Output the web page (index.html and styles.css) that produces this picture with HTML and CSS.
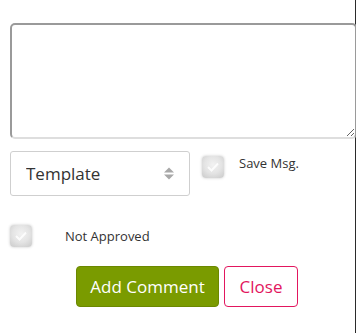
FILE: index.html
```html
<!DOCTYPE html>
<html lang="en">
<head>
    <meta charset="UTF-8">
    <meta name="viewport" content="width=device-width, initial-scale=1.0">
    <title>Add Comment</title>
    <link rel="stylesheet" href="styles.css">
</head>
<body>
    <div class="panel">
        <textarea class="comment-box"></textarea>

        <div class="row template-row">
            <div class="select-wrap">
                <select class="template-select">
                    <option>Template</option>
                </select>
                <svg class="select-arrows" width="10" height="13" viewBox="0 0 10 13">
                    <path d="M5 0.5 L10 5.5 H0 Z" fill="#a8a8a8"/>
                    <path d="M5 12.5 L10 7.5 H0 Z" fill="#a8a8a8"/>
                </svg>
            </div>
            <label class="check save-msg">
                <span class="check-box">
                    <svg width="14" height="12" viewBox="0 0 14 12"><path d="M2 6 L5.5 9.5 L12 2.5" fill="none" stroke="#fff" stroke-width="2"/></svg>
                </span>
                <span class="check-label">Save Msg.</span>
            </label>
        </div>

        <div class="row approve-row">
            <label class="check">
                <span class="check-box">
                    <svg width="14" height="12" viewBox="0 0 14 12"><path d="M2 6 L5.5 9.5 L12 2.5" fill="none" stroke="#fff" stroke-width="2"/></svg>
                </span>
                <span class="check-label approve-label">Not Approved</span>
            </label>
        </div>

        <div class="row actions">
            <button class="btn btn-primary">Add Comment</button>
            <button class="btn btn-outline">Close</button>
        </div>
    </div>
</body>
</html>
```

FILE: styles.css
```css
* {
    margin: 0;
    padding: 0;
    box-sizing: border-box;
}

body {
    font-family: 'Open Sans', 'Noto Sans', sans-serif;
    color: #333;
    background: #fff;
}

.panel {
    width: 356px;
    height: 333px;
    border-right: 1px solid #2b2b2b;
    padding: 23px 0 0 10px;
}

/* Comment textarea */
.comment-box {
    display: block;
    width: 347px;
    height: 116px;
    border: 2px solid #9a9a9a;
    border-bottom-color: #dedede;
    border-radius: 5px;
    background: #fff;
    font-family: inherit;
    resize: both;
    outline: none;
}

.row {
    display: flex;
    align-items: flex-start;
}

/* Template select */
.template-row {
    margin-top: 12px;
}

.select-wrap {
    position: relative;
    width: 180px;
    height: 45px;
}

.template-select {
    appearance: none;
    -webkit-appearance: none;
    width: 100%;
    height: 100%;
    border: 1px solid #cfcfcf;
    border-radius: 3px;
    background: #fff;
    padding: 0 0 0 15px;
    font-family: inherit;
    font-size: 17px;
    color: #333;
    outline: none;
}

.select-arrows {
    position: absolute;
    right: 16px;
    top: 16px;
}

/* Checkboxes */
.check {
    display: flex;
    align-items: center;
}

.check-box {
    width: 22px;
    height: 22px;
    border-radius: 4px;
    background: radial-gradient(circle at 50% 40%, #f2f2f2 0%, #e4e4e4 50%, #c9c9c9 100%);
    box-shadow: 0 0 3px rgba(0, 0, 0, 0.22);
    display: flex;
    align-items: center;
    justify-content: center;
}

.check-box svg {
    opacity: 0.85;
}

.check-label {
    font-size: 13px;
    margin-left: 15px;
}

.save-msg {
    margin: 5px 0 0 12px;
    align-items: flex-start;
}

.save-msg .check-label {
    margin-top: -2px;
}

.approve-row {
    margin-top: 29px;
}

.approve-label {
    margin-left: 33px;
}

/* Buttons */
.actions {
    margin: 19px 0 0 66px;
    gap: 5px;
}

.btn {
    height: 41px;
    border-radius: 4px;
    font-family: inherit;
    font-size: 17px;
    cursor: pointer;
    padding: 0;
    white-space: nowrap;
}

.btn-primary {
    width: 143px;
    background: #7a9b00;
    border: 1px solid #6b8800;
    color: #fff;
}

.btn-outline {
    width: 74px;
    background: #fff;
    border: 1px solid #e2165e;
    color: #e2165e;
}
```
